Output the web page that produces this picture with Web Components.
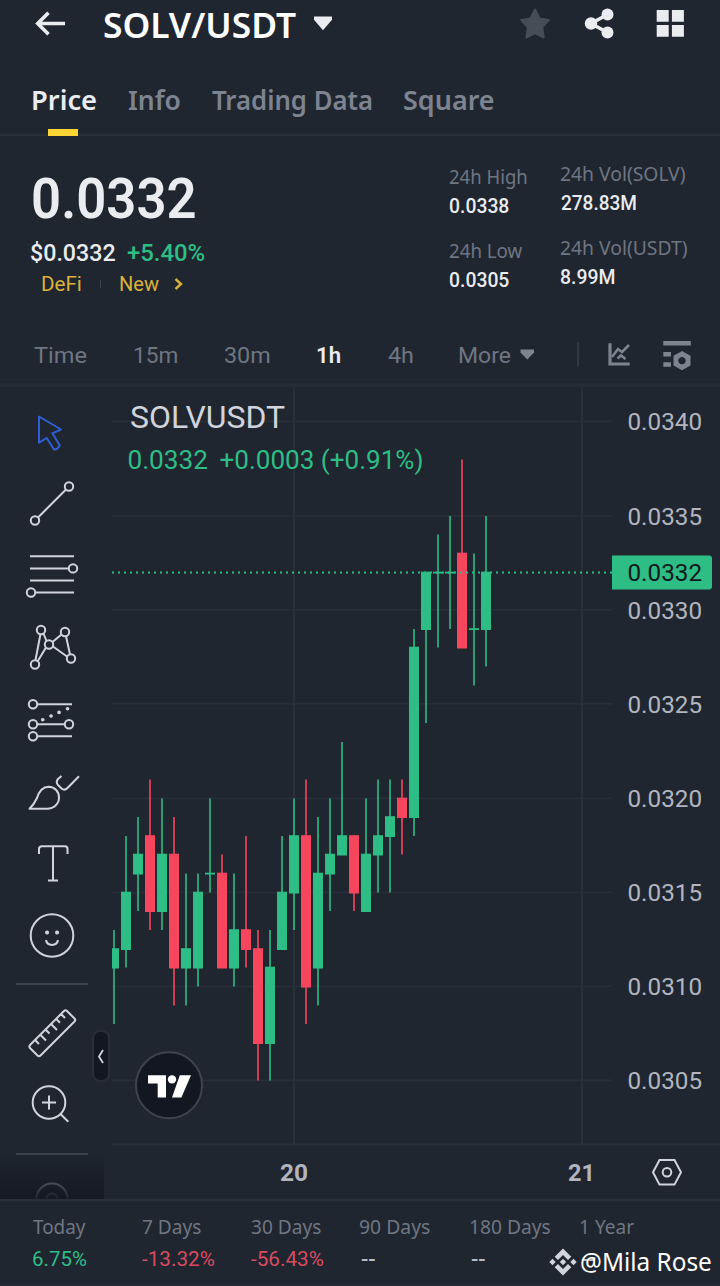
<!DOCTYPE html>
<html lang="en">
<head>
<meta charset="utf-8">
<title>SOLV/USDT</title>
<style>
html,body{margin:0;background:#1f2630}
body{width:720px;height:1286px;overflow:hidden;font-family:'Noto Sans','Open Sans',sans-serif;color:#eaecef}
</style>
</head>
<body>
<market-page></market-page>
<script>
(function (global) {
  'use strict';

  var GREEN = '#2ebd85';
  var RED = '#f6465d';
  var meter = document.createElement('canvas').getContext('2d');

  function define(name, css, html, after) {
    global.customElements.define(name, class extends HTMLElement {
      constructor() {
        super();
        this.attachShadow({ mode: 'open' });
      }

      connectedCallback() {
        this.shadowRoot.innerHTML = '<style>*{box-sizing:border-box}svg{display:block;flex:none}' + css + '</style>' +
          (typeof html === 'function' ? html(this) : html);
        if (after) after(this);
      }
    });
  }

  // One line of text whose inked width is given by the w attribute
  define('fit-text',
    ':host{display:block;flex:none;white-space:nowrap}' +
    'span{display:inline-block;transform-origin:0 50%}',
    '<span><slot></slot></span>',
    function (el) {
      var span = el.shadowRoot.querySelector('span');
      var want = parseFloat(el.getAttribute('w'));
      var cs = getComputedStyle(el);
      meter.font = cs.fontWeight + ' ' + cs.fontSize + ' ' + cs.fontFamily;
      var m = meter.measureText(el.textContent);
      var scale = want / (m.actualBoundingBoxRight + m.actualBoundingBoxLeft);
      el.style.width = want + 'px';
      span.style.transform = 'translateX(' + (m.actualBoundingBoxLeft * scale) + 'px) scaleX(' + scale + ')';
    });

  define('page-header',
    ':host{display:flex;height:50px;padding-left:35px;align-items:center}' +
    'fit-text{font-size:34.5px;line-height:50px;font-weight:600;color:#fff;margin:0 17px 0 38px}' +
    '.icons{margin-left:auto;display:flex;padding-right:34px}',
    '<svg width="31" height="50" viewBox="35 0 31 50" fill="none" stroke="#eaecef" stroke-width="3.6"><path d="M65 23.5H38M48.5 12.7L37.7 23.5L48.5 34.3"/></svg>' +
    '<fit-text w="192.5">SOLV/USDT</fit-text>' +
    '<svg width="18" height="50" viewBox="313 0 18 50"><path d="M313 16.5h18v3.2l-9 10.5-9-10.5z" fill="#eaecef"/></svg>' +
    '<div class="icons"><svg width="166" height="50" viewBox="520 0 166 50" fill="#eaecef">' +
    '<path d="M535 9.5l4.5 9 9.3 1.5-6.6 7.2 1.5 10.3-8.7-4.3-8.7 4.3 1.5-10.3-6.6-7.2 9.3-1.5z" fill="#474d57" stroke="#474d57" stroke-width="2" stroke-linejoin="round"/>' +
    '<path d="M607.5 14.5L591 23.5l16.5 9" fill="none" stroke="#eaecef" stroke-width="3.6"/>' +
    '<circle cx="607.5" cy="14.5" r="6"/><circle cx="591" cy="23.5" r="6.2"/><circle cx="607.5" cy="32.5" r="6"/>' +
    '<path d="M656.7 10h12v11.7h-12zM671.9 10h12v11.7h-12zM656.7 25h12v11.7h-12zM671.9 25h12v11.7h-12z"/></svg></div>');

  define('page-tabs',
    ':host{display:flex;height:86px;padding:35px 0 0 33px;gap:32px;border-bottom:2px solid #282f39;font-size:27.5px;line-height:30px;font-weight:600}' +
    '.tab{height:51px;display:flex;flex-direction:column;justify-content:space-between;color:#7d8490}' +
    '.on{color:#eaecef}.on::after{content:"";width:30px;height:7px;margin-left:15px;background:#fcd535}',
    '<div class="tab on"><fit-text w="63">Price</fit-text></div>' +
    '<div class="tab"><fit-text w="52">Info</fit-text></div>' +
    '<div class="tab"><fit-text w="160">Trading Data</fit-text></div>' +
    '<div class="tab"><fit-text w="89.5">Square</fit-text></div>');

  define('price-summary',
    ':host{display:flex;height:189px}' +
    '.left{width:449px;padding:34px 0 0 31px;font-family:Roboto,sans-serif}' +
    '.last{font-size:55.5px;line-height:60px;font-weight:600;margin-left:1.5px}' +
    '.row{display:flex;align-items:center}' +
    '.sub{font-size:24px;line-height:30px;height:30px;gap:11.5px;font-weight:500;margin-top:7.5px}' +
    '.up{color:#2ebd85}' +
    '.tags{font-size:20px;line-height:24px;margin:4.5px 0 0 11px;color:#d9b13b}' +
    '.tags i{width:1px;height:8px;background:#3d4550;margin:0 19px}' +
    '.tags svg{margin-left:15px}' +
    '.stats{width:111px;padding-top:29px;font-size:20px;line-height:24px}' +
    '.stats.b{width:140px;padding-top:26px}' +
    '.k{color:#6f7682;height:24px}.v{color:#eaecef;font-family:Roboto,sans-serif;font-weight:500;height:24px;margin:5px 0 21px .5px}',
    '<div class="left"><fit-text class="last" w="162">0.0332</fit-text>' +
    '<div class="row sub"><fit-text w="84">$0.0332</fit-text><fit-text class="up" w="77.5">+5.40%</fit-text></div>' +
    '<div class="row tags"><fit-text w="39">DeFi</fit-text><i></i><fit-text w="39">New</fit-text>' +
    '<svg width="9" height="14" viewBox="0 0 9 14" fill="none" stroke="#d9b13b" stroke-width="2.4"><path d="M1.5 2l5.500 5-5.500 5"/></svg></div></div>' +
    '<div class="stats"><fit-text class="k" w="77.5">24h High</fit-text><fit-text class="v" w="59">0.0338</fit-text>' +
    '<fit-text class="k" w="73.5">24h Low</fit-text><fit-text class="v" w="59">0.0305</fit-text></div>' +
    '<div class="stats b"><fit-text class="k" w="125.5">24h Vol(SOLV)</fit-text><fit-text class="v" w="75.5">278.83M</fit-text>' +
    '<fit-text class="k" w="127.5">24h Vol(USDT)</fit-text><fit-text class="v" w="54">8.99M</fit-text></div>');

  define('interval-bar',
    ':host{display:flex;align-items:center;height:62px;padding:2px 0 0 34px;border-bottom:4px solid #252c36;box-sizing:border-box;font-family:Roboto,sans-serif;font-size:22.5px;line-height:30px;color:#6f7682}' +
    '.on{color:#eaecef;font-weight:600}' +
    'fit-text + fit-text{margin-left:47.2px}' +
    '.icons{margin-left:8px}',
    '<fit-text w="53">Time</fit-text><fit-text w="43.5">15m</fit-text><fit-text w="45">30m</fit-text>' +
    '<fit-text class="on" w="23.500">1h</fit-text><fit-text w="24.5">4h</fit-text><fit-text w="52">More</fit-text>' +
    '<svg class="icons" width="173" height="56" viewBox="520 326 173 56" fill="#7d8490">' +
    '<path d="M521.5 348.500h13.500v3l-6.700 7-6.800-7z"/><path d="M578.300 341h1.500v24h-1.500z" fill="#39414c"/>' +
    '<path d="M611 342.300V363H630.700" fill="none" stroke="#7d8490" stroke-width="3.2"/>' +
    '<path d="M613 356l6-8 4 3 7-7M618.5 357.500l3.500-3 4.500 3.500" fill="none" stroke="#7d8490" stroke-width="2.6"/>' +
    '<path d="M664.3 340h27.500v4.600h-27.500zM664.3 351h7.700v4.500h-7.700zM664.3 361.300h7.700v4.500h-7.700z"/>' +
    '<path fill-rule="evenodd" d="M683 350l8.500 4.800v9.600l-8.500 4.800-8.500-4.800v-9.600zM683 355.900a3.700 3.700 0 1 0 .01 0z"/></svg>');

  // Drawing tools: top edge, height, markup in page coordinates
  var TOOLS = [
    [397, 72, '<path d="M39 416.5L61 429.5L52.3 433.3L59.8 445.5Q57 450 54 449.5L46.7 438L39 442.7Z" stroke="#2f5fd6"/>'],
    [469, 72, '<path d="M66 489.5L38 517.5"/><circle cx="69" cy="486.5" r="4.2"/><circle cx="35" cy="520.5" r="4.2"/>'],
    [541, 72, '<path d="M30 556.3H74M30 568.4H68.7M30 580.5H74M35.5 592.5H74"/><circle cx="73" cy="568.4" r="4.2"/><circle cx="31" cy="592.5" r="4.2"/>'],
    [613, 72, '<path d="M40.5 634L35.5 660M43.5 633.5L46.5 641M52.5 642L61.5 634.5M66 636L70 654.5M53 646.5L67 656.5M46 647.5L37.5 661.5"/><circle cx="41" cy="630" r="4.2"/><circle cx="65" cy="632" r="4.2"/><circle cx="49" cy="644.5" r="4.2"/><circle cx="35" cy="664.5" r="4.2"/><circle cx="71" cy="658.5" r="4.2"/>'],
    [685, 72, '<path d="M37.5 704.3H72M37.5 724.3H64.5M37.5 736.3H72"/><circle cx="33" cy="704.3" r="4.2"/><circle cx="33" cy="724.3" r="4.2"/><circle cx="69" cy="724.3" r="4.2"/><circle cx="33" cy="736.3" r="4.2"/><path d="M42.7 719.7h.1M51 716h.1M59 712.4h.1M67.5 708.7h.1" stroke-width="3.6" stroke-linecap="round"/>'],
    [757, 72, '<path d="M29.500 808.700Q34 804.500 37 798Q40.500 787 48.500 786.800C55 787 59 791.500 59 797.500C59 804 54 808.700 47 808.700Z"/><path d="M61.5 776L58 779Q55.5 782 58 785L61.5 788.5Q64.5 791 67.5 788L79 776.3"/>'],
    [829, 72, '<path d="M39 854V849Q39 846.3 42 846.3H65Q67.5 846.3 67.5 849V854M53 846.3V880.5M48 880.5H58"/>'],
    [901, 72, '<circle cx="52" cy="935.5" r="21.3"/><path d="M46 940C47 946.5 57 946.5 58 940"/><path d="M47 932.5h.1M57 932.5h.1" stroke-width="4" stroke-linecap="round"/>'],
    null,
    [997, 72, '<path d="M30.5 1044.5L64 1011Q65.5 1009.5 67 1011L74.5 1018.5Q76 1020 74.5 1021.5L40.5 1055.5Q39 1057 37.5 1055.5L30 1048Q28.5 1046.5 30.5 1044.5ZM35 1040L39 1044M40 1034.5L46 1040.5M45.5 1029.5L49.5 1033.5M51 1024L57 1030M56 1018.8L60 1022.8M61 1014L65 1018"/>'],
    [1069, 72, '<circle cx="49" cy="1102.5" r="16.3"/><path d="M42 1102.5H56M49 1095.5V1109.5M60.5 1114L68.3 1121.8"/>'],
    null,
    [1166, 33, '<circle cx="52" cy="1199" r="15.5" opacity=".7"/><circle cx="52" cy="1199" r="5.5" opacity=".5"/>']
  ];

  define('tool-rail',
    ':host{display:flex;flex-direction:column;position:relative;width:104px;height:812px;padding-top:10px;overflow:hidden}' +
    'svg{fill:none;stroke:#d1d4dc;stroke-width:2;stroke-linejoin:round}' +
    'hr{width:72px;height:2px;border:0;margin:10px 16px 12px;background:#3d434f;flex:none}' +
    'hr.low{margin:12px 16px 11px}' +
    '.fade{position:absolute;left:0;right:0;bottom:0;height:48px;background:linear-gradient(rgba(19,23,34,0),rgba(19,23,34,.9))}',
    function () {
      var n = 0;
      return TOOLS.map(function (t) {
        if (!t) return n++ ? '<hr class="low">' : '<hr>';
        return '<svg width="104" height="' + t[1] + '" viewBox="0 ' + t[0] + ' 104 ' + t[1] + '">' + t[2] + '</svg>';
      }).join('') + '<div class="fade"></div>';
    });

  // direction, high, low, body top, body bottom, in 0.0001 USDT
  var CANDLES = [
    ['g', 313, 308, 312, 311], ['g', 318, 311, 315, 312], ['g', 319, 314, 317, 316], ['r', 321, 313, 318, 314],
    ['g', 320, 313, 317, 314], ['r', 319, 309, 317, 311], ['g', 316, 309, 312, 311], ['g', 316, 310, 315, 311],
    ['g', 320, 315, 316, 316], ['r', 317, 311, 316, 311], ['g', 316, 310, 313, 311], ['r', 318, 311, 313, 312],
    ['r', 313, 305, 312, 307], ['g', 313, 305, 311, 307], ['g', 318, 312, 315, 312], ['g', 320, 313, 318, 315],
    ['r', 321, 308, 318, 310], ['g', 319, 309, 316, 311], ['g', 320, 314, 317, 316], ['g', 323, 317, 318, 317],
    ['r', 318, 314, 318, 315], ['g', 320, 314, 317, 314], ['g', 321, 315, 318, 317], ['g', 321, 315, 319, 318],
    ['r', 321, 317, 320, 319], ['g', 329, 318, 328, 319], ['g', 332, 324, 332, 329], ['g', 334, 328, 332, 332],
    ['g', 335, 329, 332, 332], ['r', 338, 328, 333, 328], ['g', 333, 326, 329, 329], ['g', 335, 327, 332, 329]
  ];

  function yOf(p) {
    return Math.round((515.8 + (335 - p) * 18.83) * 2) / 2;
  }

  function text(x, y, w, size, fill, str, extra) {
    return '<text x="' + x + '" y="' + y + '" textLength="' + w + '" lengthAdjust="spacingAndGlyphs" font-size="' + size +
      '" fill="' + fill + '"' + (extra || '') + '>' + str + '</text>';
  }

  define('candle-chart',
    ':host{display:block;width:616px;height:812px;font-family:Roboto,sans-serif}',
    function () {
      var out = '<svg width="616" height="812" viewBox="104 387 616 812">';
      var p, y;
      out += '<path d="M293 387h2v757h-2zM581 387h2v757h-2zM112 1143.500h608v2h-608z" fill="#292f39"/>';
      for (p = 340; p >= 305; p -= 5) {
        y = yOf(p);
        out += '<rect x="112" y="' + (y - 1) + '" width="500" height="1.8" fill="#292f39"/>';
        out += text(627.5, y + 8.7, 74.5, 23.5, '#b2b5be', '0.0' + p);
      }
      CANDLES.forEach(function (c, i) {
        var x = 114 + i * 12;
        var fill = c[0] === 'g' ? GREEN : RED;
        var left = Math.max(112, x - 5);
        out += '<rect x="' + (x - 1) + '" y="' + yOf(c[1]) + '" width="2" height="' + (yOf(c[2]) - yOf(c[1])) + '" fill="' + fill + '" opacity=".8"/>';
        out += '<rect x="' + left + '" y="' + (yOf(c[3]) - 0.8) + '" width="' + (x + 5 - left) + '" height="' + (yOf(c[4]) - yOf(c[3]) + 1.8) + '" fill="' + fill + '"/>';
      });
      out += '<path d="M112 572.5H612" stroke="#2ebd85" stroke-width="2" stroke-dasharray="2 4"/>' +
        '<path d="M612 555.5h97q3 0 3 3v28q0 3-3 3h-97z" fill="#2ebd85"/>' +
        text(627.5, 581.3, 74.5, 23.5, '#0f1a1c', '0.0332') +
        text(130, 428.2, 155, 30.5, '#d1d4dc', 'SOLVUSDT') +
        text(127.5, 468.6, 80.5, 26, GREEN, '0.0332') +
        text(219.5, 468.6, 204, 26, GREEN, '+0.0003 (+0.91%)') +
        text(280, 1180.5, 28, 24, '#b2b5be', '20', ' font-weight="700"') +
        text(568, 1180.5, 27, 24, '#b2b5be', '21', ' font-weight="700"') +
        '<path d="M659.5 1160h15l6.5 12.3-6.5 12.3h-15l-6.5-12.3z" fill="none" stroke="#d1d4dc" stroke-width="2"/>' +
        '<circle cx="667" cy="1172.3" r="4.3" fill="none" stroke="#d1d4dc" stroke-width="2"/>' +
        '<circle cx="169" cy="1085.3" r="33" fill="#131722" stroke="#3f434e" stroke-width="2"/>' +
        '<path d="M148 1075.3h18v22.2h-8.3v-14h-9.7zM179.8 1075.3h11.2l-9.6 22.2h-9.4z" fill="#fff"/><circle cx="172" cy="1079.4" r="4.2" fill="#fff"/></svg>';
      return out;
    });

  define('chart-panel',
    ':host{display:flex;position:relative;height:812px}' +
    '.grip{position:absolute;left:92px;top:643px;width:18px;height:52px;border:2px solid #292e39;border-radius:8px;background:#131722}',
    '<tool-rail></tool-rail><candle-chart></candle-chart>' +
    '<div class="grip"><svg width="14" height="48" viewBox="94 1032 14 48" fill="none" stroke="#d1d4dc" stroke-width="1.8"><path d="M103 1050l-4 6.5 4 6.5"/></svg></div>');

  define('period-stats',
    ':host{display:flex;position:relative;height:87px;box-sizing:border-box;border-top:2px solid #282f39;border-bottom:2px solid #252c39;padding:13px 0 0 33px;font-size:20.5px;line-height:24px;color:#6f7682}' +
    '.c{flex:none}' +
    '.v{font-family:Roboto,sans-serif;font-size:21px;margin-top:9px;color:#b7bdc6}' +
    '.flat{font-weight:500;margin-left:1px}' +
    '.up{color:#2ebd85}.down{color:#d94b5f}' +
    '.mark{position:absolute;right:9px;bottom:4px;display:flex;align-items:center;gap:4px;color:#fff;font:400 24.5px/36px "Noto Sans",sans-serif}',
    function () {
      return [
        [109, 'Today', 53, '6.75%', 53.5, 'up'], [109, '7 Days', 58.5, '-13.32%', 72.5, 'down'], [108.5, '30 Days', 69.5, '-56.43%', 72.5, 'down'],
        [110, '90 Days', 69.5, '--', 14.5, 'flat'], [110, '180 Days', 80, '--', 14.5, 'flat'], [60, '1 Year', 54.5, '--', 14.5, 'flat']
      ].map(function (s) {
        return '<div class="c" style="width:' + s[0] + 'px"><fit-text class="k" w="' + s[2] + '">' + s[1] + '</fit-text>' +
          '<fit-text class="v ' + s[5] + '" w="' + s[4] + '">' + s[3] + '</fit-text></div>';
      }).join('') +
        '<div class="mark"><svg width="28" height="28" viewBox="0 0 28 28" fill="#d1d4dc"><path d="M14 .5l8.3 8.3-3.3 3.3-5-5-5 5-3.3-3.3zM14 27.5l8.3-8.3-3.3-3.3-5 5-5-5-3.3 3.3zM14 10.8l3.2 3.2-3.2 3.2-3.2-3.2zM3.5 10.8L6.7 14l-3.2 3.2L.3 14zM24.5 10.8l3.2 3.2-3.2 3.2-3.2-3.2z"/></svg>' +
        '<fit-text w="130">@Mila Rose</fit-text></div>';
    });

  define('market-page',
    ':host{display:flex;flex-direction:column;width:720px;height:1286px;background:#1f2630}' +
    'page-header,page-tabs,price-summary,interval-bar,chart-panel,period-stats{flex:none;box-sizing:border-box}',
    '<page-header></page-header><page-tabs></page-tabs><price-summary></price-summary>' +
    '<interval-bar></interval-bar><chart-panel></chart-panel><period-stats></period-stats>');
})(window);
</script>
</body>
</html>
